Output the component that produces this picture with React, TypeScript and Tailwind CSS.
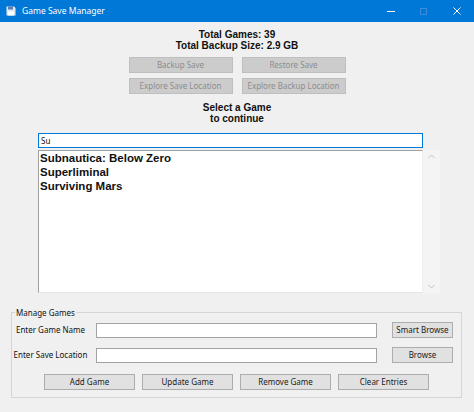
import React from "react";

const ui = { fontFamily: '"Noto Sans", "Open Sans", sans-serif' };
const arial = { fontFamily: '"Liberation Sans", Arial, sans-serif' };

const games = ["Subnautica: Below Zero", "Superliminal", "Surviving Mars"];

function DisabledButton({ label }: { label: string }) {
  return (
    <div
      className="w-[104px] h-[16px] bg-[#cccccc] border border-[#bfbfbf] text-[#8c8c8c] text-[8px] whitespace-nowrap flex items-center justify-center"
      style={ui}
    >
      {label}
    </div>
  );
}

function Button({ label, w }: { label: string; w: string }) {
  return (
    <div
      className={`${w} h-[16px] bg-[#e1e1e1] border border-[#adadad] text-[#1a1a1a] text-[8px] whitespace-nowrap flex items-center justify-center`}
      style={ui}
    >
      {label}
    </div>
  );
}

export default function App() {
  return (
    <div className="w-[474px] h-[412px] bg-[#f0f0f0] flex flex-col overflow-hidden">
      {/* Title bar */}
      <div className="h-[22px] bg-[#0078d7] flex items-center">
        <svg width="10" height="10" viewBox="0 0 10 10" className="ml-[6px]">
          <path d="M0.5 0.5h7.5l1.5 1.5v7.5h-9z" fill="#dfe8f3" />
          <rect x="2" y="0.5" width="5" height="3" fill="#5d7fab" />
          <rect x="2" y="5.5" width="6" height="4" fill="#ffffff" />
        </svg>
        <span className="ml-[6px] text-white text-[8.5px] leading-none whitespace-nowrap" style={ui}>
          Game Save Manager
        </span>
        <div className="ml-auto flex mr-px h-full">
          <div className="w-[33px] h-full flex items-center justify-center">
            <div className="w-[8px] h-px bg-white" />
          </div>
          <div className="w-[33px] h-full flex items-center justify-center">
            <div className="w-[7px] h-[7px] border border-[#3b8fdb]" />
          </div>
          <div className="w-[33px] h-full flex items-center justify-center">
            <svg width="8" height="8" viewBox="0 0 8 8">
              <path d="M0.5 0.5l7 7M7.5 0.5l-7 7" stroke="#ffffff" strokeWidth="1" />
            </svg>
          </div>
        </div>
      </div>

      {/* Content */}
      <div className="flex flex-col items-center">
        <div className="mt-[6.5px] text-[10px] leading-[11px] font-bold text-[#111] text-center" style={arial}>
          <div>Total Games: 39</div>
          <div>Total Backup Size: 2.9 GB</div>
        </div>

        <div className="mt-[6.5px] flex gap-[9px]">
          <DisabledButton label="Backup Save" />
          <DisabledButton label="Restore Save" />
        </div>
        <div className="mt-[5px] flex gap-[9px]">
          <DisabledButton label="Explore Save Location" />
          <DisabledButton label="Explore Backup Location" />
        </div>

        <div className="mt-[7.5px] text-[10px] leading-[11px] font-bold text-[#111] text-center" style={arial}>
          <div>Select a Game</div>
          <div>to continue</div>
        </div>
      </div>

      <div
        className="mt-[9.5px] ml-[38px] w-[385px] h-[15px] bg-white border border-[#0078d7] flex items-center pl-[2px] text-[8px] text-[#111]"
        style={ui}
      >
        Su
      </div>

      <div className="mt-[2px] ml-[38px] flex">
        <div className="w-[385px] h-[143px] bg-white border-l border-t border-[#a0a0a0] border-r border-b border-r-[#f0f0f0] border-b-[#e6e6e6] pl-px">
          {games.map((g) => (
            <div key={g} className="text-[11.5px] leading-[14px] font-bold text-[#111]" style={arial}>
              {g}
            </div>
          ))}
        </div>
        <div className="w-[17px] h-[143px] bg-[#f4f4f4] flex flex-col items-center justify-between py-[4px]">
          <svg width="7" height="5" viewBox="0 0 7 5">
            <path d="M0.5 4l3-3 3 3" stroke="#c2c2c2" strokeWidth="1" fill="none" />
          </svg>
          <svg width="7" height="5" viewBox="0 0 7 5">
            <path d="M0.5 1l3 3 3-3" stroke="#c2c2c2" strokeWidth="1" fill="none" />
          </svg>
        </div>
      </div>

      {/* Manage games group */}
      <fieldset className="mt-[13.5px] ml-[11px] w-[451px] border border-[#d5d5d5] pb-[7px]">
        <legend className="ml-[3px] px-px text-[8px] leading-[11px] text-[#111]" style={ui}>
          Manage Games
        </legend>
        <div className="pt-[4.5px] flex flex-col">
          <div className="h-[16px] flex items-center">
            <div className="w-[77px] flex justify-center text-[8px] text-[#111] whitespace-nowrap" style={ui}>
              Enter Game Name
            </div>
            <div className="ml-[7px] w-[281px] h-[15px] bg-white border border-[#a3a3a3]" />
            <div className="ml-[15px]">
              <Button label="Smart Browse" w="w-[61px]" />
            </div>
          </div>
          <div className="mt-[9px] h-[16px] flex items-center">
            <div className="w-[77px] flex justify-center text-[8px] text-[#111] whitespace-nowrap" style={ui}>
              Enter Save Location
            </div>
            <div className="ml-[7px] w-[281px] h-[15px] bg-white border border-[#a3a3a3]" />
            <div className="ml-[15px]">
              <Button label="Browse" w="w-[61px]" />
            </div>
          </div>
          <div className="mt-[11px] ml-[32px] flex gap-[7px]">
            <Button label="Add Game" w="w-[91px]" />
            <Button label="Update Game" w="w-[91px]" />
            <Button label="Remove Game" w="w-[91px]" />
            <Button label="Clear Entries" w="w-[91px]" />
          </div>
        </div>
      </fieldset>
    </div>
  );
}
